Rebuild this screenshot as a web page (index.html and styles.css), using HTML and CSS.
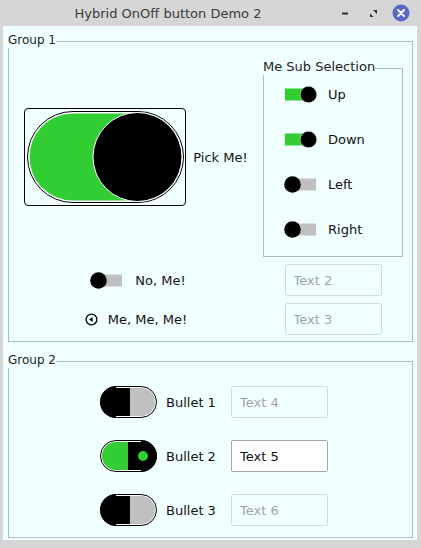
FILE: index.html
```html
<!DOCTYPE html>
<html>
<head>
<meta charset="utf-8">
<link rel="stylesheet" href="styles.css">
</head>
<body>
<div class="window">
  <div class="titlebar">
    <span class="title">Hybrid OnOff button Demo 2</span>
    <div class="controls">
      <span class="ctl"><svg width="6" height="3" viewBox="0 0 6 3"><rect x="0" y="0.5" width="6" height="2" fill="#2e2e2e"/></svg></span>
      <span class="ctl"><svg width="7" height="7" viewBox="0 0 7 7"><path d="M3 0 H7 V4 Z" fill="#2e2e2e"/><path d="M0 3.5 V7 H3.5 Z" fill="#2e2e2e"/></svg></span>
      <span class="ctl"><svg width="18" height="18" viewBox="0 0 18 18"><circle cx="9" cy="9" r="8.5" fill="#5a69c6"/><path d="M6 6 L12 12 M12 6 L6 12" stroke="#fff" stroke-width="2" stroke-linecap="round"/></svg></span>
    </div>
  </div>
  <div class="client">
    <section class="group g1">
      <div class="gh"><span class="gt">Group 1</span><span class="gl"></span></div>
      <div class="gb g1body">
        <div class="pick">
          <div class="bigframe">
            <svg width="157" height="92" viewBox="0 0 157 92">
              <rect x="0.5" y="0.5" width="156" height="91" rx="45.5" fill="#fff" stroke="#000"/>
              <rect x="2.5" y="2.5" width="152" height="87" rx="43.5" fill="#32cd32"/>
              <circle cx="110.5" cy="46" r="44.5" fill="#000" stroke="#fff" stroke-width="1"/>
            </svg>
          </div>
          <span class="lbl">Pick Me!</span>
        </div>
        <div class="sub">
          <div class="gh"><span class="gt gt-sub">Me Sub Selection</span><span class="gl"></span></div>
          <div class="gb subbody">
            <div class="opt">
              <svg class="sw" width="33" height="17" viewBox="0 0 33 17"><rect x="1" y="2.5" width="24" height="12" fill="#32cd32"/><circle cx="24.5" cy="8.5" r="8.3" fill="#000" stroke="#fff" stroke-width="0.5"/></svg>
              <span class="lbl">Up</span>
            </div>
            <div class="opt">
              <svg class="sw" width="33" height="17" viewBox="0 0 33 17"><rect x="1" y="2.5" width="24" height="12" fill="#32cd32"/><circle cx="24.5" cy="8.5" r="8.3" fill="#000" stroke="#fff" stroke-width="0.5"/></svg>
              <span class="lbl">Down</span>
            </div>
            <div class="opt">
              <svg class="sw" width="33" height="17" viewBox="0 0 33 17"><rect x="8" y="2.5" width="24" height="12" fill="#c0c0c0"/><circle cx="8.5" cy="8.5" r="8.3" fill="#000"/></svg>
              <span class="lbl">Left</span>
            </div>
            <div class="opt">
              <svg class="sw" width="33" height="17" viewBox="0 0 33 17"><rect x="8" y="2.5" width="24" height="12" fill="#c0c0c0"/><circle cx="8.5" cy="8.5" r="8.3" fill="#000"/></svg>
              <span class="lbl">Right</span>
            </div>
          </div>
        </div>
        <div class="opt no">
          <svg class="sw" width="33" height="17" viewBox="0 0 33 17"><rect x="8" y="2.5" width="24" height="12" fill="#c0c0c0"/><circle cx="8.5" cy="8.5" r="8.3" fill="#000"/></svg>
          <span class="lbl">No, Me!</span>
        </div>
        <input class="field" type="text" placeholder="Text 2">
        <div class="opt me">
          <svg width="13" height="13" viewBox="0 0 13 13"><circle cx="6.5" cy="6.5" r="5.4" fill="none" stroke="#000" stroke-width="1.3"/><path d="M4.2 6.5 L7.6 4 V9 Z" fill="#000"/></svg>
          <span class="lbl">Me, Me, Me!</span>
        </div>
        <input class="field" type="text" placeholder="Text 3">
      </div>
    </section>
    <section class="group g2">
      <div class="gh"><span class="gt">Group 2</span><span class="gl"></span></div>
      <div class="gb g2body">
        <svg width="57" height="32" viewBox="0 0 57 32">
          <rect x="0.5" y="0.5" width="56" height="31" rx="15.5" fill="#fff" stroke="#000"/>
          <rect x="2" y="2" width="53" height="28" rx="14" fill="#c0c0c0"/>
          <path d="M16 0 A16 16 0 0 0 16 32 Z" fill="#000"/>
          <rect x="14" y="2" width="16" height="28" fill="#000"/>
        </svg>
        <span class="lbl">Bullet 1</span>
        <input class="field" type="text" placeholder="Text 4">

        <svg width="57" height="32" viewBox="0 0 57 32">
          <rect x="0.5" y="0.5" width="56" height="31" rx="15.5" fill="#fff" stroke="#000"/>
          <rect x="2" y="2" width="53" height="28" rx="14" fill="#32cd32"/>
          <path d="M41 0 A16 16 0 0 1 41 32 Z" fill="#000"/>
          <rect x="28" y="2" width="15" height="28" fill="#000"/>
          <circle cx="43" cy="16" r="5" fill="#32cd32"/>
        </svg>
        <span class="lbl">Bullet 2</span>
        <input class="field filled" type="text" value="Text 5">

        <svg width="57" height="32" viewBox="0 0 57 32">
          <rect x="0.5" y="0.5" width="56" height="31" rx="15.5" fill="#fff" stroke="#000"/>
          <rect x="2" y="2" width="53" height="28" rx="14" fill="#c0c0c0"/>
          <path d="M16 0 A16 16 0 0 0 16 32 Z" fill="#000"/>
          <rect x="14" y="2" width="16" height="28" fill="#000"/>
        </svg>
        <span class="lbl">Bullet 3</span>
        <input class="field" type="text" placeholder="Text 6">
      </div>
    </section>
  </div>
</div>
</body>
</html>
```
FILE: styles.css
```css
* { box-sizing: border-box; }
html, body { margin: 0; padding: 0; }
body {
  width: 421px;
  height: 548px;
  background: #d6d6d6;
  font-family: "DejaVu Sans", sans-serif;
  color: #1a1a1a;
  overflow: hidden;
}
.window { width: 421px; height: 548px; display: flex; flex-direction: column; }
.titlebar {
  height: 26px;
  display: flex;
  align-items: center;
  background: #d6d6d6;
}
.title {
  flex: 1;
  text-align: center;
  font-size: 13px;
  color: #3a3a3a;
  padding-left: 5px;
}
.controls { display: flex; padding-right: 6px; }
.ctl { width: 28px; height: 26px; display: flex; align-items: center; justify-content: center; }
.client {
  margin: 0 4px 0 3px;
  height: 514px;
  background: #f0ffff;
  padding: 6px 4px 0 5px;
}
.gh { display: flex; height: 16px; }
.gt { font-size: 12px; line-height: 16px; color: #222; white-space: nowrap; }
.gt-sub { font-size: 13px; }
.gl {
  flex: 1;
  margin-top: 9px;
  border-top: 1px solid #a9bebe;
  border-right: 1px solid #a9bebe;
}
.gb {
  border: 1px solid #a9bebe;
  border-top: none;
}
.lbl { font-size: 13px; color: #111; white-space: nowrap; }
.g1body {
  display: grid;
  grid-template-columns: 254px 140px;
  grid-template-rows: 198px 32px 32px;
  row-gap: 7px;
  padding: 11px 0 6px 0;
}
.pick { display: flex; align-items: center; justify-self: center; align-self: center; gap: 7px; margin-top: -2px; }
.bigframe {
  width: 162px;
  height: 98px;
  border: 1px solid #000;
  border-radius: 4px;
  display: flex;
  align-items: center;
  justify-content: center;
  padding-left: 1px;
}
.bigframe svg { display: block; }
.sub { display: flex; flex-direction: column; }
.subbody {
  flex: 1;
  display: flex;
  flex-direction: column;
  gap: 29px;
  padding: 11px 0 0 20px;
}
.opt { display: flex; align-items: center; height: 16px; gap: 11px; }
.sw { display: block; flex: none; }
.no { justify-self: center; align-self: center; gap: 12px; padding-left: 4px; }
.me { justify-self: center; align-self: center; gap: 10px; }
.field {
  width: 97px;
  height: 32px;
  justify-self: center;
  border: 1px solid #d3dcdc;
  border-radius: 2px;
  background: transparent;
  font-family: "DejaVu Sans", sans-serif;
  font-size: 13px;
  color: #111;
  padding: 0 8px;
  margin: 0;
  outline: none;
}
.field::placeholder { color: #a3a3a3; }
.field.filled { background: #fff; border-color: #a6a6a6; }
.g2 { margin-top: 10px; }
.g2body {
  display: grid;
  grid-template-columns: 57px 56px 97px;
  grid-auto-rows: 32px;
  column-gap: 9px;
  row-gap: 22px;
  align-items: center;
  padding: 18px 0 11px 91px;
}
.g2body svg { display: block; }
```
